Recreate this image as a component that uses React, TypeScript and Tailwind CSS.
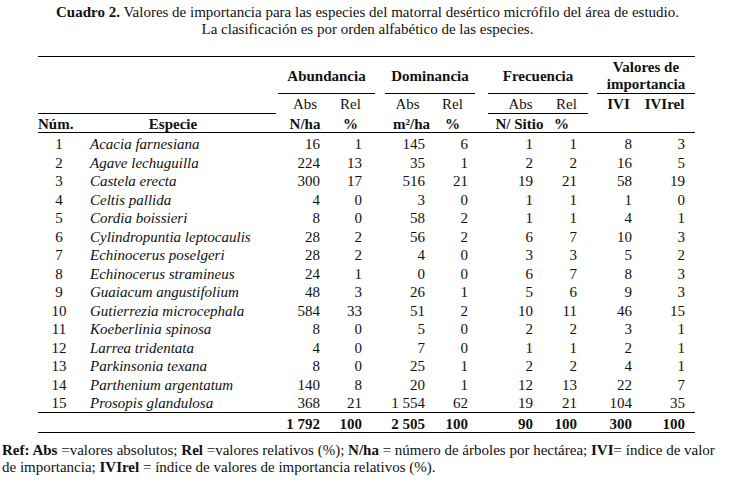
const cols =
  'grid grid-cols-[44px_196px_48px_49px_10px_45px_45px_13px_57px_43px_9px_43px_55px]'

type Row = [number, string, string, string, string, string, string, string, string, string]

const rows: Row[] = [
  [1, 'Acacia farnesiana', '16', '1', '145', '6', '1', '1', '8', '3'],
  [2, 'Agave lechuguilla', '224', '13', '35', '1', '2', '2', '16', '5'],
  [3, 'Castela erecta', '300', '17', '516', '21', '19', '21', '58', '19'],
  [4, 'Celtis pallida', '4', '0', '3', '0', '1', '1', '1', '0'],
  [5, 'Cordia boissieri', '8', '0', '58', '2', '1', '1', '4', '1'],
  [6, 'Cylindropuntia leptocaulis', '28', '2', '56', '2', '6', '7', '10', '3'],
  [7, 'Echinocerus poselgeri', '28', '2', '4', '0', '3', '3', '5', '2'],
  [8, 'Echinocerus stramineus', '24', '1', '0', '0', '6', '7', '8', '3'],
  [9, 'Guaiacum angustifolium', '48', '3', '26', '1', '5', '6', '9', '3'],
  [10, 'Gutierrezia microcephala', '584', '33', '51', '2', '10', '11', '46', '15'],
  [11, 'Koeberlinia spinosa', '8', '0', '5', '0', '2', '2', '3', '1'],
  [12, 'Larrea tridentata', '4', '0', '7', '0', '1', '1', '2', '1'],
  [13, 'Parkinsonia texana', '8', '0', '25', '1', '2', '2', '4', '1'],
  [14, 'Parthenium argentatum', '140', '8', '20', '1', '12', '13', '22', '7'],
  [15, 'Prosopis glandulosa', '368', '21', '1\u00a0554', '62', '19', '21', '104', '35'],
]

function NumCells({ v, bold }: { v: string[]; bold?: boolean }) {
  const w = bold ? 'font-bold' : ''
  return (
    <>
      <div className={`text-right pr-[6px] ${w}`}>{v[0]}</div>
      <div className={`text-right pr-[13px] ${w}`}>{v[1]}</div>
      <div />
      <div className={`text-right pr-[5px] ${w}`}>{v[2]}</div>
      <div className={`text-right pr-[7px] ${w}`}>{v[3]}</div>
      <div />
      <div className={`text-right pr-[12px] ${w}`}>{v[4]}</div>
      <div className={`text-right pr-[11px] ${w}`}>{v[5]}</div>
      <div />
      <div className={`text-right pr-[8px] ${w}`}>{v[6]}</div>
      <div className={`text-right pr-[10px] ${w}`}>{v[7]}</div>
    </>
  )
}

export default function App() {
  return (
    <div className="font-serif">
    <div className="w-[735px] h-[485px] bg-white text-[#111] font-['Liberation_Serif'] text-[15px] overflow-hidden">
      {/* caption */}
      <div className="pt-[4px] text-center leading-[17px]">
        <p>
          <b>Cuadro 2.</b> Valores de importancia para las especies del matorral desértico micrófilo del área de estudio.
        </p>
        <p>La clasificación es por orden alfabético de las especies.</p>
      </div>

      <div className="ml-[38px] w-[657px] mt-[18px] border-t-[1.5px] border-black">
        {/* group headers */}
        <div className={`${cols} h-[36px] font-bold`}>
          <div className="col-span-2" />
          <div className="col-span-2 flex items-center justify-center pt-[3px] border-b border-black">Abundancia</div>
          <div />
          <div className="col-span-2 flex items-center justify-center pt-[3px] border-b border-black">Dominancia</div>
          <div />
          <div className="col-span-2 flex items-center justify-center pt-[3px] border-b border-black">Frecuencia</div>
          <div />
          <div className="col-span-2 flex flex-col items-center justify-center pt-[2px] leading-[17px] border-b border-black">
            <span>Valores de</span>
            <span>importancia</span>
          </div>
        </div>

        {/* Abs / Rel */}
        <div className={`${cols} h-[20px] leading-[17px] pt-[3px]`}>
          <div className="col-span-2 border-b border-black mr-[2px]" />
          <div className="text-center pl-[6px]">Abs</div>
          <div className="text-center">Rel</div>
          <div />
          <div className="text-center">Abs</div>
          <div className="text-center">Rel</div>
          <div />
          <div className="col-span-2 grid grid-cols-[57px_43px] border-b border-black">
            <div className="text-center pl-[8px]">Abs</div>
            <div className="text-center">Rel</div>
          </div>
          <div />
          <div className="text-center font-bold">IVI</div>
          <div className="text-center font-bold pr-[6px]">IVIrel</div>
        </div>

        {/* units */}
        <div className={`${cols} h-[20px] leading-[18px] pt-[2px] font-bold border-b border-black`}>
          <div className="text-center pr-[12px]">Núm.</div>
          <div className="text-center pr-[14px]">Especie</div>
          <div className="text-center pl-[6px]">N/ha</div>
          <div className="text-center">%</div>
          <div />
          <div className="text-center pl-[8px]">
            m<sup className="text-[9px]">2</sup>/ha
          </div>
          <div className="text-center">%</div>
          <div />
          <div className="text-center pl-[6px]">N/ Sitio</div>
          <div className="text-center pr-[10px]">%</div>
          <div />
          <div />
          <div />
        </div>

        {/* body */}
        <div className="pt-[1px] border-b border-black">
          {rows.map((r) => (
            <div key={r[0]} className={`${cols} h-[18.5px] leading-[20px]`}>
              <div className="text-center pr-[2px]">{r[0]}</div>
              <div className="italic pl-[8px] whitespace-nowrap">{r[1]}</div>
              <NumCells v={r.slice(2) as string[]} />
            </div>
          ))}
        </div>

        {/* totals */}
        <div className={`${cols} h-[20px] leading-[20px] pt-[1px] border-b-[1.5px] border-black`}>
          <div />
          <div />
          <NumCells v={['1\u00a0792', '100', '2\u00a0505', '100', '90', '100', '300', '100']} bold />
        </div>
      </div>

      {/* footnote */}
      <p className="mt-[9px] pl-[2px] leading-[17px] whitespace-nowrap">
        <b>Ref: Abs</b> =valores absolutos; <b>Rel</b> =valores relativos (%); <b>N/ha</b> = número de árboles por hectárea;{' '}
        <b>IVI</b>= índice de valor
        <br />
        de importancia; <b>IVIrel</b> = índice de valores de importancia relativos (%).
      </p>
    </div>
    </div>
  )
}
